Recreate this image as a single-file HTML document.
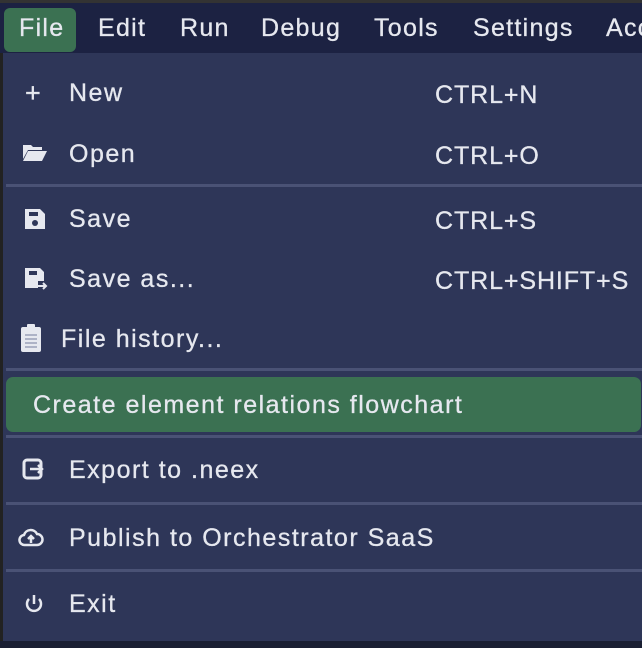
<!DOCTYPE html>
<html><head><style>
*{margin:0;padding:0;box-sizing:border-box}
body{width:642px;height:648px;overflow:hidden;background:#2e3658;font-family:"Liberation Sans",sans-serif;color:#e6e8ef;position:relative}
.a{position:absolute;white-space:nowrap}
.top{left:0;top:0;width:642px;height:3px;background:#333}
.bar{left:0;top:3px;width:642px;height:50px;background:#1c2242}
.m{top:14px;font-size:25px;letter-spacing:1.3px;-webkit-text-stroke:0.3px #e6e8ef}
.file{left:4px;top:8px;width:72px;height:44px;background:#3b7152;border-radius:6px}
.lb{left:0;top:53px;width:3px;height:595px;background:#222}
.bot{left:0;top:641px;width:642px;height:7px;background:#1a1f33}
.sep{left:6px;width:636px;height:3px;background:#4a5275}
.t{font-size:25px;letter-spacing:1.5px;-webkit-text-stroke:0.3px #e6e8ef}
.k{font-size:25px;letter-spacing:0.9px;-webkit-text-stroke:0.3px #e6e8ef}
.ic{position:absolute}
</style></head><body>
<div class="a top"></div>
<div class="a bar"></div>
<div class="a file"></div>
<div class="a m" style="left:19px">File</div>
<div class="a m" style="left:98px">Edit</div>
<div class="a m" style="left:180px">Run</div>
<div class="a m" style="left:261px">Debug</div>
<div class="a m" style="left:374px">Tools</div>
<div class="a m" style="left:473px">Settings</div>
<div class="a m" style="left:606px">Acc</div>
<div class="a lb"></div>

<div class="a t" style="left:25px;top:78px;font-size:27px">+</div>
<div class="a t" style="left:69px;top:79px">New</div>
<div class="a k" style="left:435px;top:81px">CTRL+N</div>
<svg class="ic" style="left:22px;top:143px" width="26" height="20" viewBox="0 0 26 20"><path d="M1 2h8l2 2h9v3H6L1 16z" fill="#e6e8ef"/><path d="M6 8h19l-5 10H1z" fill="#e6e8ef"/></svg>
<div class="a t" style="left:69px;top:140px">Open</div>
<div class="a k" style="left:435px;top:142px">CTRL+O</div>
<div class="a sep" style="top:184px"></div>

<svg class="ic" style="left:24px;top:208px" width="22" height="22" viewBox="0 0 22 22"><path d="M1 1h15l5 5v15H1z" fill="#e6e8ef"/><rect x="5" y="4" width="9" height="4" fill="#2e3658"/><circle cx="11" cy="15" r="3" fill="#2e3658"/></svg>
<div class="a t" style="left:69px;top:205px">Save</div>
<div class="a k" style="left:435px;top:207px">CTRL+S</div>
<svg class="ic" style="left:24px;top:267px" width="24" height="24" viewBox="0 0 24 24"><path d="M1 1h15l4 4v9h-6v7H1z" fill="#e6e8ef"/><rect x="5" y="4" width="8" height="4" fill="#2e3658"/><path d="M14 19h8M19 16l3 3-3 3" stroke="#e6e8ef" stroke-width="2" fill="none"/></svg>
<div class="a t" style="left:69px;top:265px">Save as...</div>
<div class="a k" style="left:435px;top:267px">CTRL+SHIFT+S</div>
<svg class="ic" style="left:20px;top:323px" width="22" height="30" viewBox="0 0 22 30"><rect x="1" y="4" width="20" height="25" rx="2" fill="#e6e8ef"/><rect x="7" y="1" width="8" height="6" rx="1" fill="#e6e8ef"/><path d="M5 12h12M5 16h12M5 20h12M5 24h12" stroke="#9aa0b8" stroke-width="1.5"/></svg>
<div class="a t" style="left:61px;top:325px">File history...</div>
<div class="a sep" style="top:368px"></div>

<div class="a" style="left:6px;top:377px;width:635px;height:55px;background:#3b7152;border-radius:7px"></div>
<div class="a t" style="left:33px;top:391px">Create element relations flowchart</div>
<div class="a sep" style="top:435px"></div>

<svg class="ic" style="left:22px;top:458px" width="24" height="22" viewBox="0 0 24 22"><rect x="2" y="2" width="17" height="18" rx="3" fill="none" stroke="#e6e8ef" stroke-width="3"/><path d="M8 11h12M16 7l4 4-4 4" stroke="#e6e8ef" stroke-width="2.5" fill="none"/></svg>
<div class="a t" style="left:69px;top:456px">Export to .neex</div>
<div class="a sep" style="top:502px"></div>

<svg class="ic" style="left:18px;top:527px" width="26" height="20" viewBox="0 0 26 20"><path d="M7 18a5 5 0 0 1-1-10 7 7 0 0 1 13-1 5 5 0 0 1 0 11z" fill="none" stroke="#e6e8ef" stroke-width="2.5"/><path d="M13 16V9M10 12l3-3 3 3" stroke="#e6e8ef" stroke-width="2.5" fill="none"/></svg>
<div class="a t" style="left:69px;top:524px">Publish to Orchestrator SaaS</div>
<div class="a sep" style="top:569px"></div>

<svg class="ic" style="left:24px;top:593px" width="20" height="22" viewBox="0 0 20 22"><path d="M10 2v9" stroke="#e6e8ef" stroke-width="2.5"/><path d="M5 6a7 7 0 1 0 10 0" stroke="#e6e8ef" stroke-width="2.5" fill="none"/></svg>
<div class="a t" style="left:69px;top:590px">Exit</div>
<div class="a bot"></div>
</body></html>
